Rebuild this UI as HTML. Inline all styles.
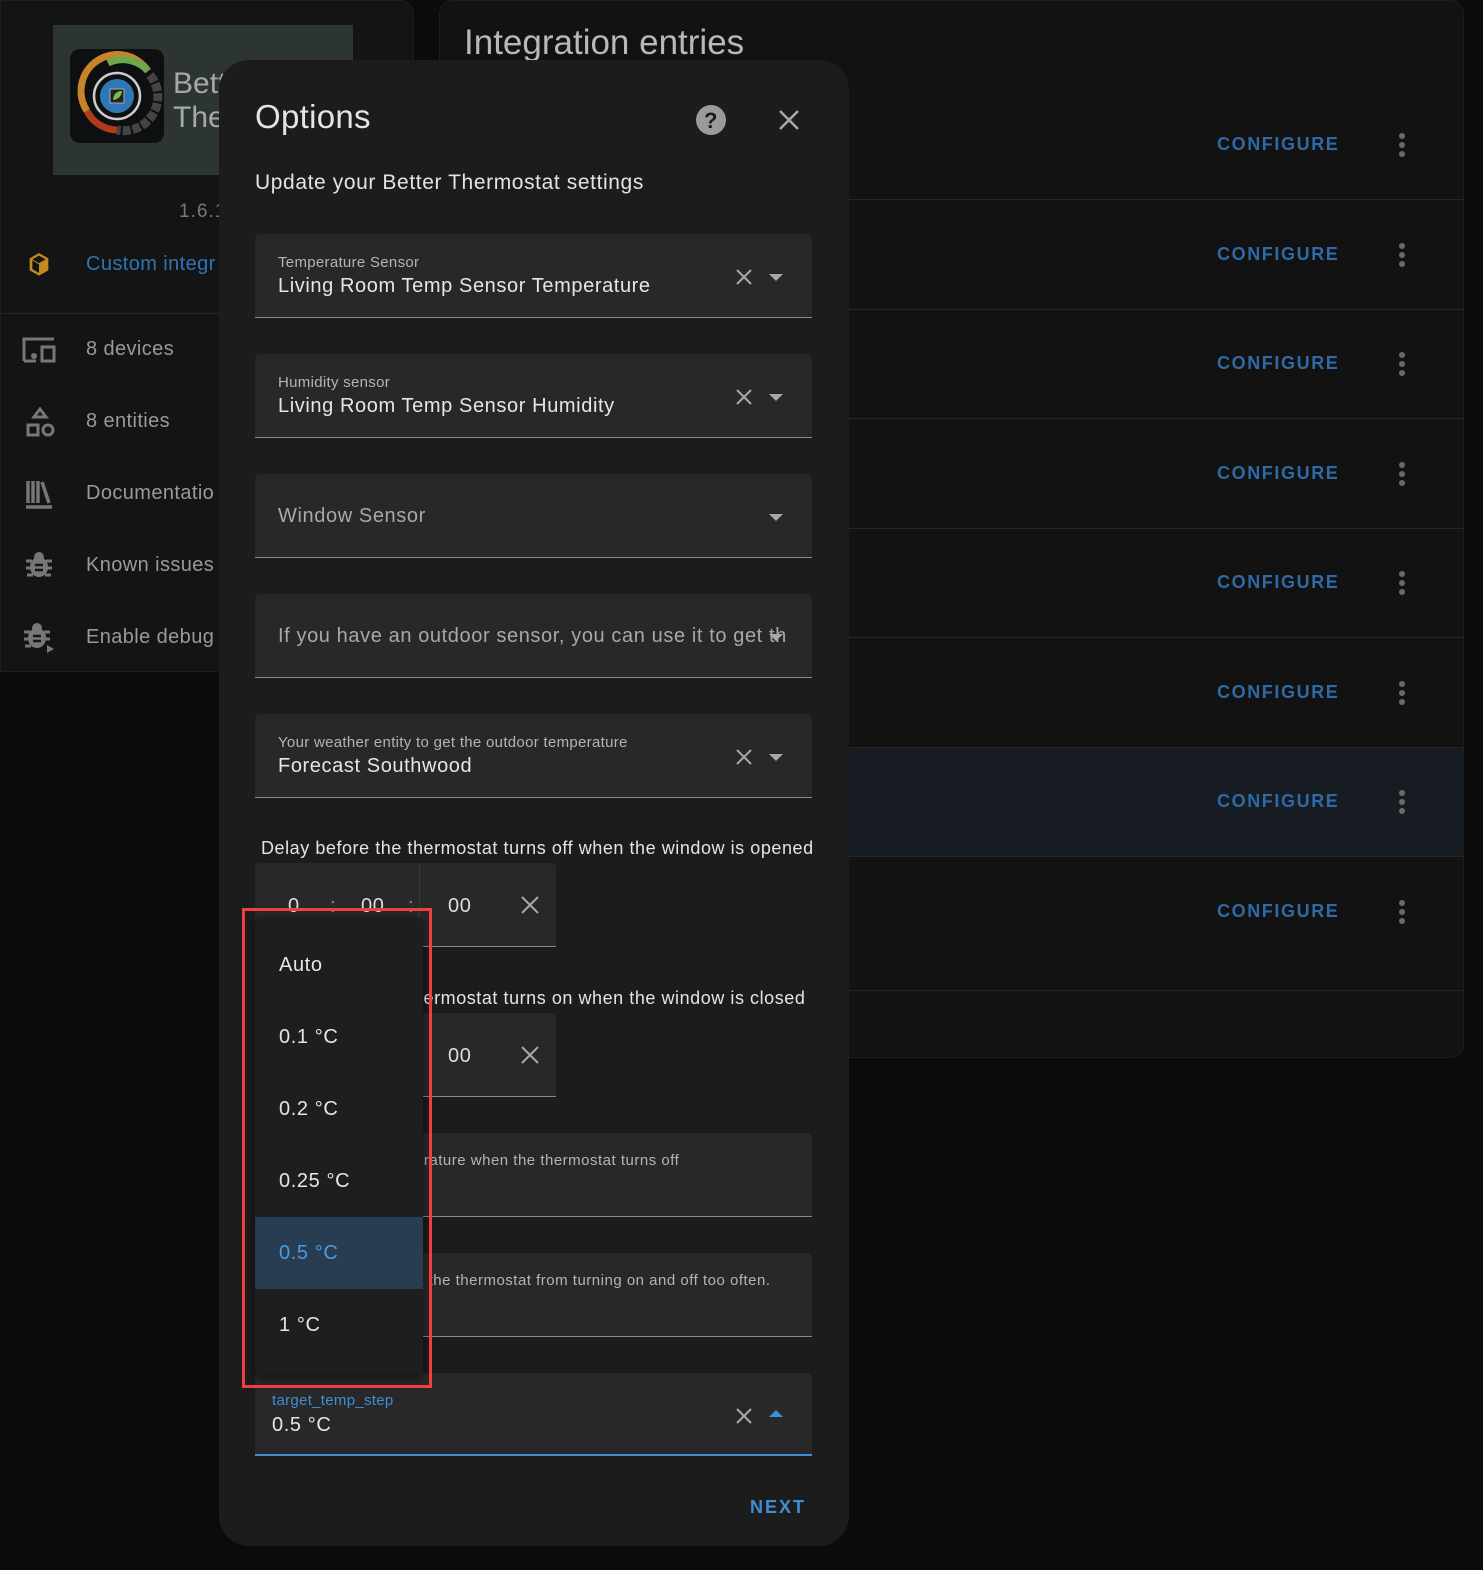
<!DOCTYPE html>
<html><head><meta charset="utf-8">
<style>
*{box-sizing:border-box;margin:0;padding:0}
body{width:1483px;height:1570px;background:#0b0b0b;font-family:"Liberation Sans",sans-serif;position:relative;overflow:hidden;color:#e1e1e1}
.abs{position:absolute}
.lcard{left:0;top:0;width:414px;height:672px;background:#141414;border-radius:0 14px 14px 0;border:1px solid #1e1e1e}
.rcard{left:439px;top:0;width:1025px;height:1058px;background:#121212;border-radius:14px;border:1px solid #1e1e1e}
.row{position:absolute;left:0;right:0;border-top:1px solid #262626}
.cfg{position:absolute;left:777px;font-size:18px;letter-spacing:1.6px;color:#2e6aa5;font-weight:bold}
.dots{position:absolute;left:959px;width:6px}
.dots i{display:block;width:6px;height:6px;border-radius:50%;background:#6a6a6a;margin-bottom:3px}
.menu{position:absolute;left:85px;font-size:20px;color:#9a9a9a;letter-spacing:.4px}
.dlg{left:219px;top:60px;width:630px;height:1486px;background:#1c1c1c;border-radius:30px;letter-spacing:.6px}
.fld{position:absolute;left:36px;width:557px;height:84px;background:#282828;border-radius:5px 5px 0 0;border-bottom:1px solid #8a8a8a}
.lbl{position:absolute;left:23px;top:20px;font-size:15px;color:#b4b4b4;letter-spacing:.3px}
.val{position:absolute;left:23px;top:41px;font-size:20px;color:#e6e6e6}
.ph{position:absolute;left:23px;top:31px;font-size:20px;color:#a8a8a8;white-space:nowrap}
.x{position:absolute;left:478px;top:32px;width:22px;height:22px}
.arr{position:absolute;left:514px;top:40px;width:0;height:0;border-left:7px solid transparent;border-right:7px solid transparent;border-top:7px solid #a8a8a8}
.item{position:absolute;left:0;width:168px;height:72px;font-size:20px;color:#e6e6e6;padding:36px 0 0 24px;line-height:0;letter-spacing:.6px}
</style></head><body>

<div class="abs lcard">
  <div class="abs" style="left:52px;top:24px;width:300px;height:150px;background:#2d3530"></div>
  <svg class="abs" style="left:69px;top:48px" width="94" height="94" viewBox="0 0 94 94">
    <rect width="94" height="94" rx="10" fill="#0d0f10"/>
    <path d="M17 62 A34 34 0 0 1 78 22" fill="none" stroke="#c8842a" stroke-width="7"/>
    <path d="M38 14 A34 34 0 0 1 78 22" fill="none" stroke="#6fa84a" stroke-width="7"/>
    <path d="M17 62 A34 34 0 0 0 47 81" fill="none" stroke="#b03a1c" stroke-width="7"/>
    <path d="M80 26 A34 34 0 0 1 47 81" fill="none" stroke="#444" stroke-width="9" stroke-dasharray="8 2"/>
    <circle cx="47" cy="47" r="23" fill="none" stroke="#ccc" stroke-width="2.5"/>
    <circle cx="47" cy="47" r="17" fill="#2f78b5"/>
    <rect x="40" y="40" width="14" height="14" fill="#222" stroke="#aaa"/>
    <path d="M43 51 Q44 42 52 42 Q51 50 43 51z" fill="#7ac043"/>
  </svg>
  <div class="abs" style="left:172px;top:66px;font-size:30px;color:#a6aaa7;line-height:34px">Bett<br>The</div>
  <div class="abs" style="left:178px;top:200px;font-size:19px;color:#777;letter-spacing:1px">1.6.1</div>
  <svg class="abs" style="left:22px;top:248px" width="32" height="32" viewBox="0 0 24 24"><path fill="#c48a21" d="M5 7l7-4 7 4v9l-7 4-7-4z M7 8.5v6.5l5 3v-6.5z M12 5l-5 2.8 5 2.8 5-2.8z" fill-rule="evenodd"/></svg>
  <div class="menu" style="top:252px;color:#2e75b6">Custom integr</div>
  <div class="abs" style="left:0;top:312px;width:414px;border-top:1px solid #262626"></div>
  <svg class="abs" style="left:21px;top:334px" width="34" height="28" viewBox="0 0 34 28"><path d="M2 26V4h30M2 26h12M20 12h12v14H20z" fill="none" stroke="#777" stroke-width="3"/><circle cx="12" cy="21" r="3" fill="#777"/></svg>
  <div class="menu" style="top:337px">8 devices</div>
  <svg class="abs" style="left:24px;top:406px" width="30" height="30" viewBox="0 0 30 30"><path d="M15 2l6 8H9z M3 18h10v10H3z" fill="none" stroke="#777" stroke-width="3"/><circle cx="23" cy="23" r="5" fill="none" stroke="#777" stroke-width="3"/></svg>
  <div class="menu" style="top:409px">8 entities</div>
  <svg class="abs" style="left:24px;top:478px" width="28" height="30" viewBox="0 0 28 30"><path d="M3 2v22M8 2v22M13 2v22M17 3l7 21M1 28h26" stroke="#777" stroke-width="3.5"/></svg>
  <div class="menu" style="top:481px">Documentatio</div>
  <svg class="abs" style="left:24px;top:550px" width="28" height="28" viewBox="0 0 28 28"><ellipse cx="14" cy="16" rx="9" ry="10" fill="#777"/><circle cx="14" cy="6" r="5" fill="#777"/><path d="M1 10h6M21 10h6M1 17h6M21 17h6M2 24h6M20 24h6" stroke="#777" stroke-width="3"/><path d="M10 14h8M10 19h8" stroke="#141414" stroke-width="2.5"/></svg>
  <div class="menu" style="top:553px">Known issues</div>
  <svg class="abs" style="left:22px;top:620px" width="32" height="32" viewBox="0 0 32 32"><ellipse cx="14" cy="17" rx="9" ry="10" fill="#777"/><circle cx="14" cy="7" r="5" fill="#777"/><path d="M1 11h6M21 11h6M1 18h6M21 18h6M2 25h6" stroke="#777" stroke-width="3"/><path d="M10 15h8M10 20h8" stroke="#141414" stroke-width="2.5"/><path d="M24 24l7 4-7 4z" fill="#777"/></svg>
  <div class="menu" style="top:625px">Enable debug l</div>
</div>

<div class="abs rcard">
  <div class="abs" style="left:24px;top:22px;font-size:35px;color:#b8b8b8">Integration entries</div>
  <div class="row" style="top:746px;height:110px;background:#171b22;border-top:1px solid #262626"></div>
  <div class="row" style="top:198px"></div><div class="row" style="top:308px"></div><div class="row" style="top:417px"></div>
  <div class="row" style="top:527px"></div><div class="row" style="top:636px"></div><div class="row" style="top:746px"></div>
  <div class="row" style="top:855px"></div><div class="row" style="top:989px"></div>
  <div class="cfg" style="top:133px">CONFIGURE</div><div class="dots" style="top:132px"><i></i><i></i><i></i></div>
  <div class="cfg" style="top:243px">CONFIGURE</div><div class="dots" style="top:242px"><i></i><i></i><i></i></div>
  <div class="cfg" style="top:352px">CONFIGURE</div><div class="dots" style="top:351px"><i></i><i></i><i></i></div>
  <div class="cfg" style="top:462px">CONFIGURE</div><div class="dots" style="top:461px"><i></i><i></i><i></i></div>
  <div class="cfg" style="top:571px">CONFIGURE</div><div class="dots" style="top:570px"><i></i><i></i><i></i></div>
  <div class="cfg" style="top:681px">CONFIGURE</div><div class="dots" style="top:680px"><i></i><i></i><i></i></div>
  <div class="cfg" style="top:790px">CONFIGURE</div><div class="dots" style="top:789px"><i></i><i></i><i></i></div>
  <div class="cfg" style="top:900px">CONFIGURE</div><div class="dots" style="top:899px"><i></i><i></i><i></i></div>
</div>

<div class="abs dlg">
  <div class="abs" style="left:36px;top:38px;font-size:33px;color:#e4e4e4;letter-spacing:.3px">Options</div>
  <svg class="abs" style="left:476px;top:44px" width="32" height="32" viewBox="0 0 32 32"><circle cx="16" cy="16" r="15" fill="#9a9a9a"/><text x="16" y="24" text-anchor="middle" font-family="Liberation Sans" font-weight="bold" font-size="22" fill="#1c1c1c">?</text></svg>
  <svg class="abs" style="left:559px;top:49px" width="22" height="22" viewBox="0 0 22 22"><path d="M2 2L20 20M20 2L2 20" stroke="#a8a8a8" stroke-width="2.5"/></svg>
  <div class="abs" style="left:36px;top:111px;font-size:21px;color:#e4e4e4;letter-spacing:.6px">Update your Better Thermostat settings</div>

  <div class="fld" style="top:174px"><div class="lbl">Temperature Sensor</div><div class="val">Living Room Temp Sensor Temperature</div>
    <svg class="x" viewBox="0 0 22 22"><path d="M4 4L18 18M18 4L4 18" stroke="#a8a8a8" stroke-width="2"/></svg><div class="arr"></div></div>
  <div class="fld" style="top:294px"><div class="lbl">Humidity sensor</div><div class="val">Living Room Temp Sensor Humidity</div>
    <svg class="x" viewBox="0 0 22 22"><path d="M4 4L18 18M18 4L4 18" stroke="#a8a8a8" stroke-width="2"/></svg><div class="arr"></div></div>
  <div class="fld" style="top:414px"><div class="ph">Window Sensor</div><div class="arr"></div></div>
  <div class="fld" style="top:534px;overflow:hidden"><div class="ph" style="width:508px;overflow:hidden">If you have an outdoor sensor, you can use it to get the</div><div class="arr"></div></div>
  <div class="fld" style="top:654px"><div class="lbl">Your weather entity to get the outdoor temperature</div><div class="val">Forecast Southwood</div>
    <svg class="x" viewBox="0 0 22 22"><path d="M4 4L18 18M18 4L4 18" stroke="#a8a8a8" stroke-width="2"/></svg><div class="arr"></div></div>

  <div class="abs" style="left:42px;top:778px;font-size:18px;color:#e4e4e4;white-space:nowrap;letter-spacing:.55px">Delay before the thermostat turns off when the window is opened</div>
  <div class="fld" style="top:803px;width:301px;height:84px">
    <div class="abs" style="left:164px;top:0;height:84px;border-left:1px solid #3a3a3a"></div>
    <div class="abs" style="left:33px;top:32px;font-size:20px;color:#ddd">0</div>
    <div class="abs" style="left:75px;top:32px;font-size:20px;color:#888">:</div>
    <div class="abs" style="left:106px;top:32px;font-size:20px;color:#ddd">00</div>
    <div class="abs" style="left:153px;top:32px;font-size:20px;color:#888">:</div>
    <div class="abs" style="left:193px;top:32px;font-size:20px;color:#ddd">00</div>
    <svg class="abs" style="left:264px;top:31px" width="22" height="22" viewBox="0 0 22 22"><path d="M3 3L19 19M19 3L3 19" stroke="#a8a8a8" stroke-width="2"/></svg>
  </div>
  <div class="abs" style="left:42px;top:928px;font-size:18px;color:#e4e4e4;white-space:nowrap;letter-spacing:.55px">Delay before the thermostat turns on when the window is closed</div>
  <div class="fld" style="top:953px;width:301px;height:84px">
    <div class="abs" style="left:164px;top:0;height:84px;border-left:1px solid #3a3a3a"></div>
    <div class="abs" style="left:193px;top:32px;font-size:20px;color:#ddd">00</div>
    <svg class="abs" style="left:264px;top:31px" width="22" height="22" viewBox="0 0 22 22"><path d="M3 3L19 19M19 3L3 19" stroke="#a8a8a8" stroke-width="2"/></svg>
  </div>
  <div class="fld" style="top:1073px"><div class="lbl" style="white-space:nowrap;top:19px;letter-spacing:.5px">Set the target temperature when the thermostat turns off</div></div>
  <div class="fld" style="top:1193px"><div class="lbl" style="white-space:nowrap;top:19px;letter-spacing:.5px">Tolerance to prevent the thermostat from turning on and off too often.</div></div>
  <div class="fld" style="top:1313px;height:83px;border-bottom:2px solid #3e8fd6">
    <div class="lbl" style="left:17px;top:19px;color:#3e8fd6">target_temp_step</div>
    <div class="val" style="left:17px">0.5 °C</div>
    <svg class="x" viewBox="0 0 22 22"><path d="M4 4L18 18M18 4L4 18" stroke="#a8a8a8" stroke-width="2"/></svg>
    <div class="arr" style="border-top:none;border-bottom:7px solid #3e8fd6;top:37px"></div>
  </div>
  <div class="abs" style="left:531px;top:1437px;font-size:18px;font-weight:bold;letter-spacing:2px;color:#3e8fd6">NEXT</div>
</div>

<div class="abs" style="left:255px;top:917px;width:168px;height:458px;background:#1e1e1e;border-radius:4px;box-shadow:0 4px 10px rgba(0,0,0,.5)">
  <div class="item" style="top:12px">Auto</div>
  <div class="item" style="top:84px">0.1 °C</div>
  <div class="item" style="top:156px">0.2 °C</div>
  <div class="item" style="top:228px">0.25 °C</div>
  <div class="item" style="top:300px;background:#293d52;color:#4a9be0">0.5 °C</div>
  <div class="item" style="top:372px">1 °C</div>
</div>
<div class="abs" style="left:242px;top:908px;width:190px;height:480px;border:3px solid #ef4040"></div>
</body></html>
